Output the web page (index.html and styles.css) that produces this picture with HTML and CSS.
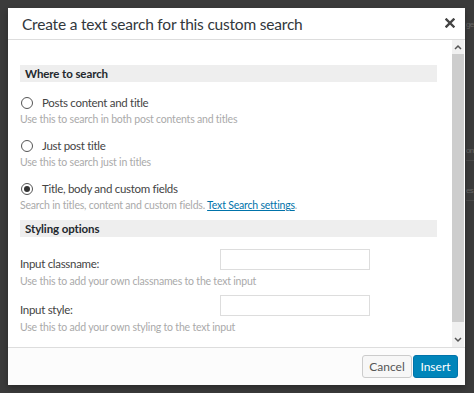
FILE: index.html
```html
<!DOCTYPE html>
<html>
<head>
<meta charset="utf-8">
<link rel="stylesheet" href="styles.css">
</head>
<body>
<div class="page">
  <div class="behind b1">ge</div>
  <div class="behind b2">on</div>
  <div class="behind b3">es</div>
  <div class="dialog">
    <div class="dlg-head">
      <div class="dlg-title">Create a text search for this custom search</div>
      <div class="dlg-close"><svg width="10" height="10" viewBox="0 0 10 10"><path d="M1.5 1.5 L8.5 8.5 M8.5 1.5 L1.5 8.5" stroke="#444" stroke-width="2.4" stroke-linecap="square"/></svg></div>
    </div>
    <div class="dlg-body">
      <div class="content">
        <div class="section">Where to search</div>
        <div class="opt">
          <label class="radio-row"><span class="radio"></span><span class="lbl">Posts content and title</span></label>
          <div class="desc">Use this to search in both post contents and titles</div>
        </div>
        <div class="opt">
          <label class="radio-row"><span class="radio"></span><span class="lbl">Just post title</span></label>
          <div class="desc">Use this to search just in titles</div>
        </div>
        <div class="opt">
          <label class="radio-row"><span class="radio checked"></span><span class="lbl">Title, body and custom fields</span></label>
          <div class="desc">Search in titles, content and custom fields. <a class="link" href="#">Text Search settings</a>.</div>
        </div>
        <div class="section s2">Styling options</div>
        <div class="field">
          <div class="field-row"><span class="flbl">Input classname:</span><span class="input"></span></div>
          <div class="desc">Use this to add your own classnames to the text input</div>
        </div>
        <div class="field">
          <div class="field-row"><span class="flbl">Input style:</span><span class="input"></span></div>
          <div class="desc">Use this to add your own styling to the text input</div>
        </div>
      </div>
      <div class="scrollbar">
        <div class="arrow up"><svg width="8" height="6" viewBox="0 0 8 6"><path d="M1 5 L4 2 L7 5" fill="none" stroke="#555" stroke-width="1.5"/></svg></div>
        <div class="thumb"></div>
        <div class="track"></div>
        <div class="arrow down"><svg width="8" height="6" viewBox="0 0 8 6"><path d="M1 1 L4 4 L7 1" fill="none" stroke="#555" stroke-width="1.5"/></svg></div>
      </div>
    </div>
    <div class="dlg-foot">
      <button class="btn cancel">Cancel</button>
      <button class="btn insert">Insert</button>
    </div>
  </div>
</div>
</body>
</html>
```
FILE: styles.css
```css
html, body {
  margin: 0;
  padding: 0;
  background: #3b3b3b;
}
.page {
  position: relative;
  width: 474px;
  height: 393px;
  overflow: hidden;
  padding: 8px;
  box-sizing: border-box;
  font-family: "Lato", "Open Sans", sans-serif;
}
.behind {
  position: absolute;
  left: 466px;
  color: #666;
  font-size: 8px;
  letter-spacing: -0.6px;
  font-family: "Liberation Sans", sans-serif;
}
.b1 { top: 20px; }
.b2 { top: 146px; }
.b3 { top: 186px; }
.b2::after, .b3::after {
  content: "";
  position: absolute;
  left: 0;
  right: -10px;
  bottom: -6px;
  border-bottom: 1px solid #4a4a4a;
}
.dialog {
  position: relative;
  width: 457px;
  height: 377px;
  background: #fff;
  display: flex;
  flex-direction: column;
  box-shadow: 0 3px 6px rgba(0,0,0,0.3);
}
.dlg-head {
  height: 31px;
  border-bottom: 1px solid #ddd;
  display: flex;
  align-items: center;
  justify-content: space-between;
  padding: 0 10px 0 14px;
  flex: none;
}
.dlg-title {
  font-size: 15.5px;
  letter-spacing: -0.2px;
  color: #32373c;
  line-height: 20px;
}
.dlg-close {
  display: flex;
  margin-top: -1px;
}
.dlg-body {
  flex: 1;
  display: flex;
  min-height: 0;
}
.content {
  flex: 1;
  padding: 25px 15px 0 12px;
  overflow: hidden;
}
.section {
  background: #eee;
  font-weight: bold;
  font-size: 11.5px;
  letter-spacing: -0.1px;
  color: #23282d;
  height: 17px;
  line-height: 17px;
  padding-left: 5px;
}
.opt {
  margin-top: 13px;
}
.opt + .opt { margin-top: 12px; }
.radio-row {
  display: flex;
  align-items: center;
  height: 16px;
}
.radio {
  width: 10px;
  height: 10px;
  border: 1px solid #555;
  border-radius: 50%;
  margin-left: 1px;
  margin-right: 8px;
  position: relative;
  box-sizing: content-box;
}
.radio.checked::after {
  content: "";
  position: absolute;
  left: 2px;
  top: 2px;
  width: 6px;
  height: 6px;
  border-radius: 50%;
  background: #333;
}
.lbl, .flbl {
  font-size: 11.5px;
  letter-spacing: -0.3px;
  color: #444;
  line-height: 16px;
}
.lbl { padding-left: 1px; }
.desc {
  font-size: 10.5px;
  letter-spacing: -0.2px;
  color: #aaa;
  margin-top: 1px;
  line-height: 14px;
}
.link {
  color: #0073aa;
  text-decoration: underline;
}
.s2 { margin-top: 8px; }
.field { margin-top: 14px; }
.field + .field { margin-top: 9px; }
.field-row {
  display: flex;
  align-items: flex-end;
  height: 21px;
}
.flbl {
  width: 200px;
}
.input {
  flex: none;
  width: 148px;
  height: 19px;
  border: 1px solid #ddd;
  margin-bottom: 2px;
}
.field .desc { margin-top: 2px; }
.scrollbar {
  width: 12px;
  display: flex;
  flex-direction: column;
  margin-right: 1px;
}
.arrow {
  height: 14px;
  display: flex;
  align-items: center;
  justify-content: center;
  background: #f0f0f0;
}
.thumb {
  height: 268px;
  background: #cdcdcd;
}
.track {
  flex: 1;
  background: #f0f0f0;
}
.dlg-foot {
  flex: none;
  height: 37px;
  border-top: 1px solid #ddd;
  background: #fcfcfc;
  display: flex;
  align-items: center;
  justify-content: flex-end;
  padding-right: 7px;
}
.btn {
  height: 23px;
  font-family: "Lato", "Open Sans", sans-serif;
  font-size: 12px;
  border-radius: 3px;
  padding: 0 4px;
}
.cancel {
  background: #f7f7f7;
  border: 1px solid #ccc;
  color: #555;
  width: 50px;
}
.insert {
  background: #0085ba;
  border: 1px solid #0073aa;
  color: #fff;
  width: 45px;
  margin-left: 1px;
}
```
